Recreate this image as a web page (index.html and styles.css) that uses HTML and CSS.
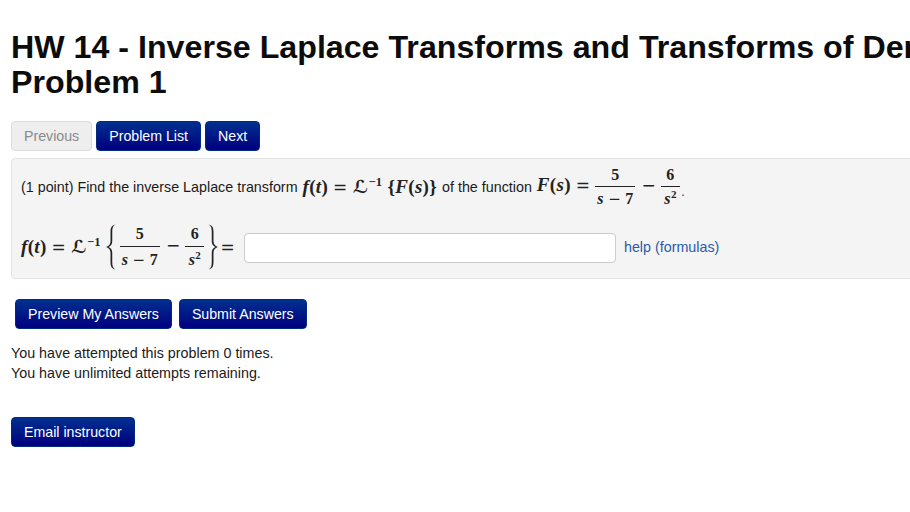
FILE: index.html
```html
<!DOCTYPE html>
<html lang="en">
<head>
<meta charset="utf-8">
<title>Problem 1</title>
<link rel="stylesheet" href="styles.css">
</head>
<body>
<main class="page">
  <h1 class="title">HW 14 - Inverse Laplace Transforms and Transforms of Derivatives<br>Problem 1</h1>
  <nav class="nav">
    <span class="btn disabled">Previous</span>
    <a class="btn">Problem List</a>
    <a class="btn">Next</a>
  </nav>
  <section class="well">
    <p class="q">
      <span>(1 point) Find the inverse Laplace transform</span>
      <span class="m"><i>f</i>(<i>t</i>) <span class="op">=</span> <span class="cal">ℒ</span><sup>−1</sup> {<i>F</i>(<i>s</i>)}</span>
      <span>of the function</span>
      <span class="m"><i>F</i>(<i>s</i>) <span class="op">=</span> <span class="frac"><span class="num">5</span><span class="den"><i>s</i> <span class="op small">−</span> 7</span></span><span class="op minus">−</span><span class="frac short"><span class="num">6</span><span class="den"><i>s</i><sup>2</sup></span></span></span><span class="dot">.</span>
    </p>
    <div class="a">
      <span class="m"><i>f</i>(<i>t</i>) <span class="op">=</span> <span class="cal">ℒ</span><sup>−1</sup></span>
      <svg class="brace" viewBox="0 0 12 48" aria-hidden="true"><path d="M10.500 .5C6.500 1.500 5.500 4 5.500 8V18C5.500 21 4 23 1 24C4 25 5.500 27 5.500 30V40C5.500 44 6.500 46.500 10.500 47.500C8 46 7.300 44 7.300 40V30C7.300 27 6 25 3.500 24C6 23 7.300 21 7.300 18V8C7.300 4 8 2 10.500 .5Z"/></svg>
      <span class="m"><span class="frac"><span class="num">5</span><span class="den"><i>s</i> <span class="op small">−</span> 7</span></span><span class="op minus">−</span><span class="frac short"><span class="num">6</span><span class="den"><i>s</i><sup>2</sup></span></span></span>
      <svg class="brace flip" viewBox="0 0 12 48" aria-hidden="true"><path d="M10.500 .5C6.500 1.500 5.500 4 5.500 8V18C5.500 21 4 23 1 24C4 25 5.500 27 5.500 30V40C5.500 44 6.500 46.500 10.500 47.500C8 46 7.300 44 7.300 40V30C7.300 27 6 25 3.500 24C6 23 7.300 21 7.300 18V8C7.300 4 8 2 10.500 .5Z"/></svg>
      <span class="m eq"><span class="op">=</span></span>
      <input class="answer" type="text" aria-label="answer">
      <a class="help">help (formulas)</a>
    </div>
  </section>
  <div class="actions">
    <a class="btn">Preview My Answers</a>
    <a class="btn">Submit Answers</a>
  </div>
  <p class="attempts">You have attempted this problem 0 times.<br>You have unlimited attempts remaining.</p>
  <a class="btn email">Email instructor</a>
</main>
</body>
</html>
```

FILE: styles.css
```css
html, body { margin: 0; padding: 0; background: #fff; overflow: hidden; height: 512px; }
body { font-family: "Liberation Sans", Arial, sans-serif; font-size: 14.3px; line-height: 20px; color: #1a1a1a; }
.page { padding: 30px 0 0 11px; width: 1100px; }
.title { margin: 0; font-size: 32.2px; line-height: 35px; font-weight: 700; color: #0c0c0c; }
.nav { display: flex; gap: 4px; margin-top: 21px; }
.btn {
  display: inline-block; box-sizing: border-box; height: 30px; padding: 4px 12px; border: 1px solid #002a7a;
  border-radius: 4px; background: linear-gradient(#00308f, #00007f); color: #fff; font-size: 14.2px; line-height: 20px;
}
.btn.disabled { background: #eee; border-color: #dcdcdc; color: #8a8a8a; }
.well {
  box-sizing: border-box; margin-top: 7px; height: 121px; padding: 0 0 0 9px; background: #f4f4f4;
  border: 1px solid #e4e4e4; border-radius: 4px; width: 1000px;
}
.q { display: flex; align-items: center; gap: 5px; margin: 0; height: 56px; white-space: nowrap; }
.m { font-family: "Liberation Serif", serif; font-size: 19px; font-weight: 700; white-space: nowrap; color: #222; letter-spacing: .3px; }
.m sup { font-size: 12.5px; line-height: 0; }
.op { font-family: "DejaVu Sans", sans-serif; font-size: 17px; font-weight: 400; }
.op.small { font-size: 15px; }
.cal { font-family: "DejaVu Sans", sans-serif; font-style: italic; font-size: 18px; }
.frac { display: inline-flex; flex-direction: column; align-items: center; vertical-align: middle; width: 40px; }
.frac.short { width: 19px; }
.num { height: 23px; line-height: 21px; width: 100%; text-align: center; border-bottom: 1px solid #222; font-size: 16px; box-sizing: border-box; }
.den { line-height: 24px; height: 23px; font-size: 16px; white-space: nowrap; }
.den sup { font-size: 11px; }
.minus { margin: 0 5px 0 6px; }
.dot { margin-left: -4px; position: relative; top: 4px; color: #555; }
.a { display: flex; align-items: center; margin-top: 9px; height: 46px; }
.a .num { line-height: 19px; }
.a .den { line-height: 25px; }
.brace { width: 12px; height: 46px; margin: 0 3px 0 4px; fill: #222; flex: none; }
.brace.flip { transform: scaleX(-1); margin: 0 -2px 0 3px; }
.eq { margin: 0 9px 0 3px; }
.answer {
  box-sizing: border-box; width: 372px; height: 30px; margin-top: 2px; padding: 4px 6px; background: #fff; border: 1px solid #ccc; border-radius: 4px;
}
.help { margin-left: 8px; color: #2d5aa8; }
.actions { display: flex; gap: 7px; margin: 20px 0 0 4px; }
.attempts { margin: 14px 0 0; line-height: 20px; }
.email { margin-top: 34px; }
```
